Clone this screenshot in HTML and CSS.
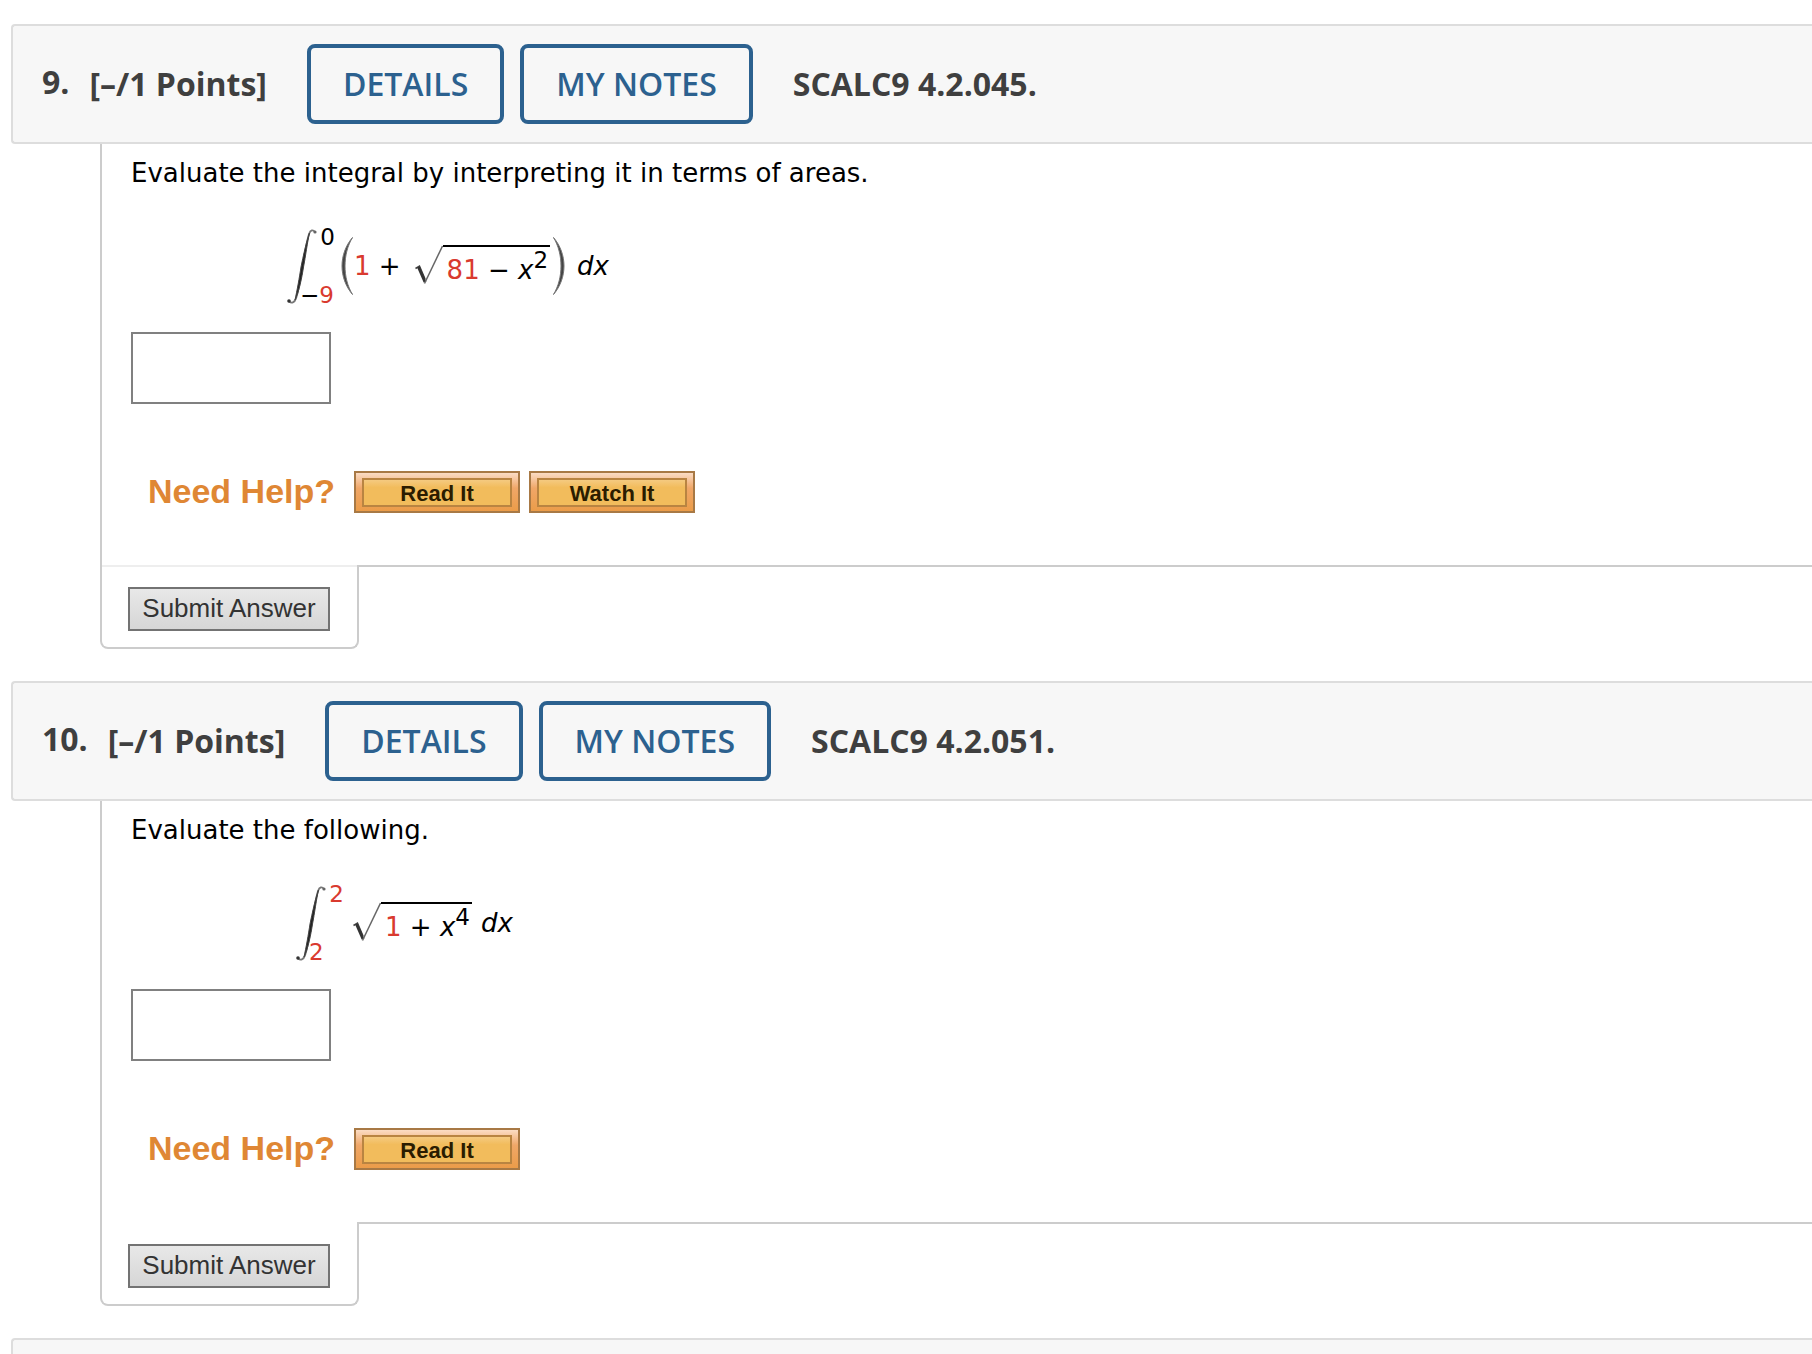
FILE: index.html
```html
<!DOCTYPE html>
<html lang="en">
<head>
    <meta charset="UTF-8">
    <meta name="viewport" content="width=device-width, initial-scale=1.0">
    <title>Homework 4.2</title>
    <link rel="stylesheet" href="styles.css">
</head>
<body>
    <!-- shared math symbols -->
    <svg class="symbols" aria-hidden="true">
        <symbol id="integral" viewBox="0 0 30 75">
            <path d="M28 3C26 .5 23.500 .8 22 5C20 12 17 28 15.500 38C14 48 11 63 9 69.500C7.500 74 4.500 74.500 2 72.500" fill="none" stroke="#777" stroke-width="1.800"/>
            <path d="M22.500 4C19.500 12 16 28 14 38C12.500 48 10 62 8 71C12 63 15 48 16.500 38C18.500 28 20.500 12 22.500 4Z" fill="#222" stroke="#444" stroke-width="1"/>
            <circle cx="2" cy="72" r="1.800" fill="#333"/>
            <circle cx="28" cy="3" r="1.600" fill="#666"/>
        </symbol>
        <symbol id="paren" viewBox="0 0 12 58">
            <path d="M11.500 .5C-2.500 17-2.500 41 11.500 57.500C1.500 41 1.500 17 11.500 .5Z" fill="#444" stroke="#777" stroke-width="1"/>
        </symbol>
        <symbol id="radical" viewBox="0 0 28 40">
            <path d="M.5 23.500L4.500 21L10 34" fill="none" stroke="#444" stroke-width="1.500"/>
            <path d="M3.500 22L10 37" fill="none" stroke="#333" stroke-width="3"/>
            <path d="M9.500 38.500L27.500 1" fill="none" stroke="#666" stroke-width="1.500"/>
        </symbol>
    </svg>

    <section class="question">
        <header class="question-header">
            <span class="number">9.</span>
            <span class="points">[–/1 Points]</span>
            <div class="header-buttons">
                <button type="button" class="header-btn">DETAILS</button>
                <button type="button" class="header-btn">MY NOTES</button>
            </div>
            <span class="reference">SCALC9 4.2.045.</span>
        </header>
        <div class="question-body">
            <p class="prompt">Evaluate the integral by interpreting it in terms of areas.</p>
            <div class="math">
                <svg class="integral"><use href="#integral"/></svg>
                <div class="limits">
                    <span class="upper">0</span>
                    <span class="lower">−<span class="value">9</span></span>
                </div>
                <div class="expr">
                    <svg class="paren"><use href="#paren"/></svg>
                    <span class="term"><span class="value">1</span> +</span>
                    <span class="root">
                        <svg class="radical"><use href="#radical"/></svg>
                        <span class="radicand"><span class="value">81</span> − <i>x</i><sup>2</sup></span>
                    </span>
                    <svg class="paren paren-close"><use href="#paren"/></svg>
                    <i class="dx">dx</i>
                </div>
            </div>
            <input type="text" class="answer" aria-label="Answer to question 9">
            <div class="help">
                <span class="help-label">Need Help?</span>
                <button type="button" class="help-btn"><span class="help-face">Read It</span></button>
                <button type="button" class="help-btn"><span class="help-face">Watch It</span></button>
            </div>
        </div>
        <div class="submit-box submit-box-ruled">
            <button type="button" class="submit-btn">Submit Answer</button>
        </div>
    </section>

    <section class="question">
        <header class="question-header">
            <span class="number">10.</span>
            <span class="points">[–/1 Points]</span>
            <div class="header-buttons">
                <button type="button" class="header-btn">DETAILS</button>
                <button type="button" class="header-btn">MY NOTES</button>
            </div>
            <span class="reference">SCALC9 4.2.051.</span>
        </header>
        <div class="question-body">
            <p class="prompt">Evaluate the following.</p>
            <div class="math math-inset">
                <svg class="integral"><use href="#integral"/></svg>
                <div class="limits">
                    <span class="upper value">2</span>
                    <span class="lower value">2</span>
                </div>
                <div class="expr">
                    <span class="root">
                        <svg class="radical"><use href="#radical"/></svg>
                        <span class="radicand"><span class="value">1</span> + <i>x</i><sup>4</sup></span>
                    </span>
                    <i class="dx">dx</i>
                </div>
            </div>
            <input type="text" class="answer" aria-label="Answer to question 10">
            <div class="help">
                <span class="help-label">Need Help?</span>
                <button type="button" class="help-btn"><span class="help-face">Read It</span></button>
            </div>
        </div>
        <div class="submit-box">
            <button type="button" class="submit-btn">Submit Answer</button>
        </div>
    </section>

    <section class="question">
        <header class="question-header"></header>
    </section>
</body>
</html>
```
FILE: styles.css
```css
* {
    margin: 0;
    padding: 0;
    box-sizing: border-box;
}

body {
    padding: 24px 0 0 11px;
    background: #fff;
    color: #000;
    font-family: Verdana, "DejaVu Sans", sans-serif;
    font-size: 26px;
    line-height: 32px;
}

.symbols {
    position: absolute;
    width: 0;
    height: 0;
}

.question {
    margin-bottom: 32px;
}

/* Header bar */
.question-header {
    display: flex;
    align-items: center;
    min-height: 120px;
    padding: 18px 0 18px 29px;
    background: #f7f7f7;
    border: 2px solid #ddd;
    border-right: none;
    border-radius: 4px 0 0 4px;
    color: #3f3f3f;
    font-family: "Open Sans", sans-serif;
    font-size: 32px;
    font-weight: 700;
    line-height: 40px;
}

.number {
    padding-bottom: 4px;
    margin-right: 20px;
}

.header-buttons {
    display: flex;
    gap: 16px;
    margin: 0 40px;
}

.header-btn {
    height: 80px;
    padding: 0 32px 2px;
    background: none;
    border: 4px solid #2c618f;
    border-radius: 8px;
    color: #2c618f;
    font-family: inherit;
    font-size: 32px;
    font-weight: 600;
    cursor: pointer;
}

/* Question content */
.question-body {
    margin-left: 89px;
    padding: 13px 0 52px 29px;
    border-left: 2px solid #ccc;
    border-bottom: 2px solid #ccc;
}

.prompt {
    margin-bottom: 40px;
}

.math {
    display: flex;
    align-items: center;
    height: 75px;
    margin-bottom: 28px;
    padding-left: 156px;
}

.math-inset {
    padding-left: 165px;
}

.value {
    color: #d93a2f;
}

.integral {
    width: 30px;
    height: 75px;
}

.limits {
    display: flex;
    flex-direction: column;
    justify-content: space-between;
    height: 84px;
    min-width: 35px;
    margin-left: -17px;
    padding-bottom: 2px;
    font-size: 23px;
    line-height: 24px;
}

.upper {
    align-self: flex-end;
}

.expr {
    display: flex;
    align-items: center;
    padding-bottom: 2px;
}

.paren {
    width: 12px;
    height: 58px;
    margin: 0 1px 0 6px;
}

.paren-close {
    margin: 0 3px;
    transform: scaleX(-1);
}

.term {
    margin-right: 5px;
}

.root {
    display: flex;
    margin-left: 9px;
}

.radical {
    width: 28px;
    height: 40px;
}

.radicand {
    padding: 7px 2px 0 4px;
    border-top: 2px solid #000;
    white-space: nowrap;
}

.radicand sup {
    font-size: 23px;
    line-height: 0;
    vertical-align: 11px;
}

.dx {
    margin-left: 9px;
}

.answer {
    display: block;
    width: 200px;
    height: 72px;
    padding: 0 12px;
    border: 2px solid #808080;
    font: inherit;
}

/* Help row */
.help {
    display: flex;
    align-items: center;
    gap: 9px;
    margin-top: 67px;
    padding-left: 17px;
    font-family: Arial, "Liberation Sans", sans-serif;
    font-weight: 700;
}

.help-label {
    margin-right: 10px;
    padding-bottom: 2px;
    color: #df8734;
    font-size: 34px;
}

.help-btn {
    width: 166px;
    height: 42px;
    padding: 5px 6px;
    background: linear-gradient(#fbdcc4, #f0a768 40%, #eb9c49);
    border: 2px solid #a87945;
    font: inherit;
    cursor: pointer;
}

.help-face {
    display: block;
    height: 29px;
    background: linear-gradient(#f5ca80, #f2bc5c 30%);
    border: 2px solid #b98441;
    color: #2b1c00;
    font-size: 22px;
    line-height: 27px;
}

/* Submit tab under the question */
.submit-box {
    position: relative;
    width: 259px;
    margin: -2px 0 0 89px;
    padding: 22px 0 16px 26px;
    background: #fff;
    border: 2px solid #ccc;
    border-top: none;
    border-radius: 0 0 8px 8px;
}

.submit-box-ruled {
    box-shadow: inset 0 2px #eee;
}

.submit-btn {
    display: block;
    width: 202px;
    height: 44px;
    padding-bottom: 2px;
    background: linear-gradient(#e8e8e8, #d6d6d6);
    border: 2px solid #737373;
    color: #333;
    font-family: Arial, "Liberation Sans", sans-serif;
    font-size: 26px;
    cursor: pointer;
}
```
